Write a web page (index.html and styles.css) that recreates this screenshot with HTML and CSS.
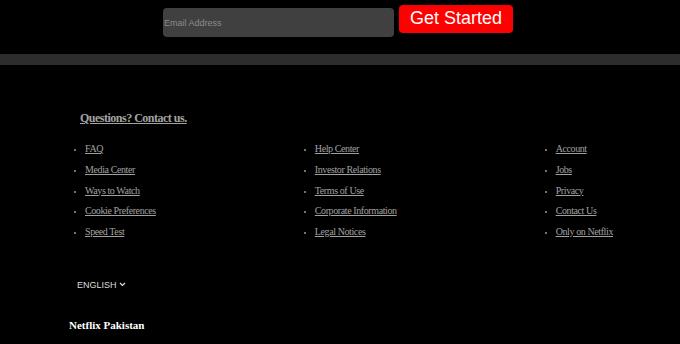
FILE: index.html
```html
<!DOCTYPE html>
<html lang="en">
<head>
    <meta charset="UTF-8">
    <meta name="viewport" content="width=device-width, initial-scale=1.0">
    <title>Netflix Footer</title>
    <link rel="stylesheet" href="styles.css">
</head>
<body>
    <form class="signup">
        <input class="email" type="email" placeholder="Email Address">
        <button class="start" type="button">Get Started</button>
    </form>
    <div class="divider"></div>
    <footer class="footer">
        <a class="contact" href="#">Questions? Contact us.</a>
        <div class="links">
            <ul>
                <li><a href="#">FAQ</a></li>
                <li><a href="#">Media Center</a></li>
                <li><a href="#">Ways to Watch</a></li>
                <li><a href="#">Cookie Preferences</a></li>
                <li><a href="#">Speed Test</a></li>
            </ul>
            <ul>
                <li><a href="#">Help Center</a></li>
                <li><a href="#">Investor Relations</a></li>
                <li><a href="#">Terms of Use</a></li>
                <li><a href="#">Corporate Information</a></li>
                <li><a href="#">Legal Notices</a></li>
            </ul>
            <ul>
                <li><a href="#">Account</a></li>
                <li><a href="#">Jobs</a></li>
                <li><a href="#">Privacy</a></li>
                <li><a href="#">Contact Us</a></li>
                <li><a href="#">Only on Netflix</a></li>
            </ul>
        </div>
        <div class="lang">
            ENGLISH
            <svg width="7" height="5" viewBox="0 0 7 5"><path d="M1 1l2.5 2.5L6 1" fill="none" stroke="#ddd" stroke-width="1.2"/></svg>
        </div>
        <p class="country">Netflix Pakistan</p>
    </footer>
</body>
</html>
```

FILE: styles.css
```css
body,ul,li,p{
    margin: 0;
    padding: 0;
}
body{
    background: #000;
    font-family: "Liberation Serif", serif;
}
.signup{
    display: flex;
    justify-content: center;
    align-items: flex-start;
    gap: 5px;
    padding: 5px 4px 0 0;
}
.email{
    width: 231px;
    height: 29px;
    margin-top: 3px;
    box-sizing: border-box;
    border: none;
    border-radius: 4px;
    background: #404040;
    padding: 0 1px;
    font-family: "Liberation Sans", sans-serif;
    font-size: 9px;
    color: #fff;
    outline: none;
}
.email::placeholder{
    color: #8c8c8c;
}
.start{
    width: 114px;
    height: 28px;
    border: none;
    border-radius: 4px;
    background: #ff0000;
    color: #fff;
    font-family: "Liberation Sans", sans-serif;
    font-size: 18px;
    padding: 0 0 2px;
}
.divider{
    height: 11px;
    margin-top: 17px;
    background: #2d2d2d;
}
.footer{
    padding: 43px 67px 0 70px;
    color: #999;
}
.contact{
    display: inline-block;
    margin-left: 10px;
    font-size: 12px;
    font-weight: bold;
    letter-spacing: -0.5px;
    color: #a3a3a3;
}
.links{
    display: flex;
    justify-content: space-between;
    margin-top: 17px;
}
.links ul{
    padding-left: 15px;
    font-size: 10px;
    letter-spacing: -0.4px;
}
.links li{
    height: 20.75px;
}
.links li::marker{
    font-size: 8px;
}
.links a{
    color: #a0a0a0;
}
.lang{
    display: flex;
    align-items: center;
    gap: 2px;
    margin: 33px 0 0 7px;
    font-family: "Liberation Sans", sans-serif;
    font-size: 9px;
    color: #ddd;
}
.country{
    margin-top: 29px;
    margin-left: -1px;
    font-size: 11px;
    font-weight: bold;
    color: #fff;
}
```
